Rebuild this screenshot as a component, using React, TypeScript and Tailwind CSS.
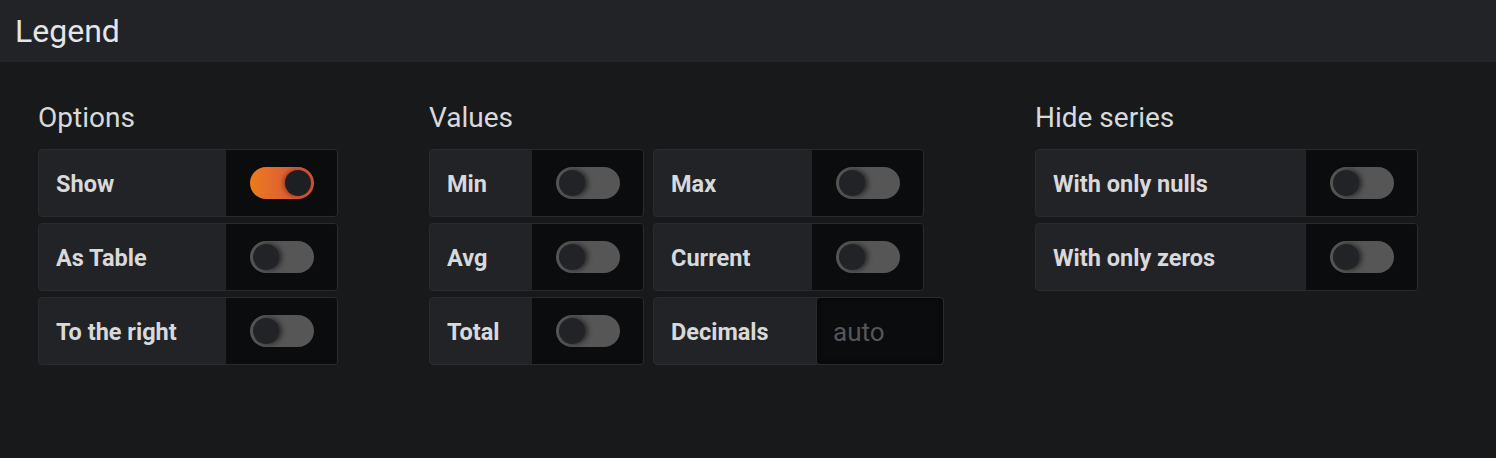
import React from "react";

function Toggle({ on }: { on?: boolean }) {
  return (
    <div className="flex w-[111px] shrink-0 items-center justify-center self-stretch bg-[#0b0c0e]">
      {on ? (
        <div className="relative ml-[1px] h-[32px] w-[64px] rounded-full bg-gradient-to-r from-[#eb7b18] to-[#d44a3a]">
          <div className="absolute right-[3px] top-[3px] h-[26px] w-[26px] rounded-full bg-[#1e1f22] shadow-[-2px_0_4px_rgba(0,0,0,0.35)]" />
        </div>
      ) : (
        <div className="relative ml-[1px] h-[32px] w-[64px] rounded-full bg-[#565656]">
          <div className="absolute left-[3px] top-[3px] h-[26px] w-[26px] rounded-full bg-[#222326] shadow-[3px_0_5px_rgba(0,0,0,0.55)]" />
        </div>
      )}
    </div>
  );
}

function Row({
  label,
  labelW,
  on,
}: {
  label: string;
  labelW: string;
  on?: boolean;
}) {
  return (
    <div className="flex h-[68px] overflow-hidden rounded-[4px] border border-[#2a2b2e] bg-[#222326]">
      <div className={`flex items-center pl-[17px] pt-[3px] text-[23.5px] font-bold text-[#d8d9da] ${labelW}`}>
        {label}
      </div>
      <Toggle on={on} />
    </div>
  );
}

export default function App() {
  return (
    <div
      className="h-[458px] w-[1496px] bg-[#18191b] text-[#d8d9da]"
      style={{ fontFamily: "Roboto, 'Liberation Sans', sans-serif" }}
    >
      <div className="flex h-[62px] items-center bg-[#222327] pl-[15px] text-[32px] text-[#e4e5e6]">
        Legend
      </div>
      <div className="flex gap-[91px] pl-[38px] pt-[40px]">
        <div className="flex flex-col">
          <div className="mb-[15px] h-[32px] text-[28px] leading-[32px]">Options</div>
          <div className="flex w-[300px] flex-col gap-[6px]">
            <Row label="Show" labelW="w-[187px]" on />
            <Row label="As Table" labelW="w-[187px]" />
            <Row label="To the right" labelW="w-[187px]" />
          </div>
        </div>
        <div className="flex flex-col">
          <div className="mb-[15px] h-[32px] text-[28px] leading-[32px]">Values</div>
          <div className="flex gap-[9px]">
            <div className="flex w-[215px] flex-col gap-[6px]">
              <Row label="Min" labelW="w-[103px]" />
              <Row label="Avg" labelW="w-[103px]" />
              <Row label="Total" labelW="w-[103px]" />
            </div>
            <div className="flex flex-col gap-[6px]">
              <div className="w-[271px]">
                <Row label="Max" labelW="w-[159px]" />
              </div>
              <div className="w-[271px]">
                <Row label="Current" labelW="w-[159px]" />
              </div>
              <div className="flex h-[68px] w-[291px] overflow-hidden rounded-[4px] border border-[#2a2b2e] bg-[#222326]">
                <div className="flex w-[162px] items-center pl-[17px] pt-[3px] text-[23.5px] font-bold text-[#d8d9da]">
                  Decimals
                </div>
                <div className="flex flex-1 items-center rounded-[4px] border-l border-[#2a2b2e] bg-[#0b0c0e] pl-[16px] pt-[2px] text-[26px] text-[#555658] shadow-[inset_0_0_6px_rgba(0,0,0,0.6)]">
                  auto
                </div>
              </div>
            </div>
          </div>
        </div>
        <div className="flex flex-col">
          <div className="mb-[15px] h-[32px] text-[28px] leading-[32px]">Hide series</div>
          <div className="flex w-[383px] flex-col gap-[6px]">
            <Row label="With only nulls" labelW="w-[270px]" />
            <Row label="With only zeros" labelW="w-[270px]" />
          </div>
        </div>
      </div>
    </div>
  );
}
